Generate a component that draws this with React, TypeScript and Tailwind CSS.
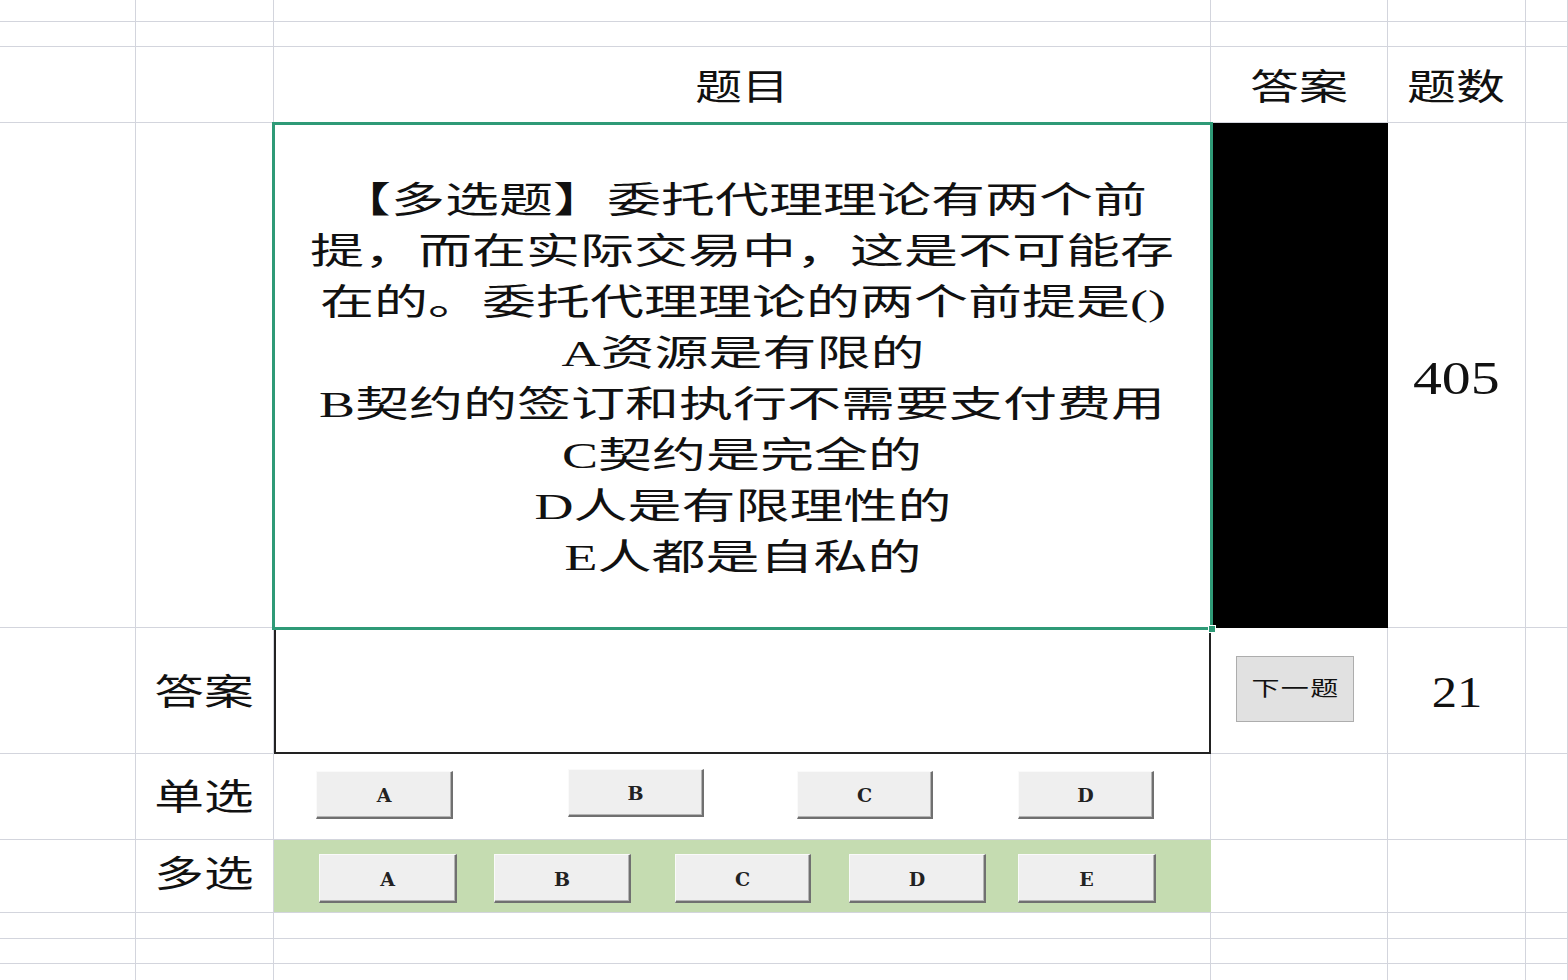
import React from "react";

const FONT = { fontFamily: '"Liberation Serif", "Noto Sans CJK SC", serif' };
const BTNFONT = { fontFamily: '"DejaVu Serif", "Liberation Serif", serif' };

function XBtn({ label, className }: { label: string; className: string }) {
  return (
    <div
      className={
        "flex items-center justify-center bg-[#efefef] border-t border-l border-t-[#fafafa] border-l-[#fafafa] border-r-2 border-b-2 border-r-[#707070] border-b-[#707070] shadow-[inset_-1px_-1px_0_#b4b4b4] " +
        className
      }
    >
      <span className="pt-[2px] text-[19px] leading-none font-semibold text-[#222]" style={BTNFONT}>
        {label}
      </span>
    </div>
  );
}

const lines = [
  "【多选题】委托代理理论有两个前",
  "提，而在实际交易中，这是不可能存",
  "在的。委托代理理论的两个前提是()",
  "A资源是有限的",
  "B契约的签订和执行不需要支付费用",
  "C契约是完全的",
  "D人是有限理性的",
  "E人都是自私的",
];

function cell(r: number, c: number) {
  const base = "border-r border-b border-[#d3d5dd]";
  if (r === 2 && c === 2)
    return (
      <div key={`${r}-${c}`} className={base + " flex items-center justify-center pt-[6px]"}>
        <span className="inline-block scale-x-[1.3] text-[36px] leading-none text-[#111]">题目</span>
      </div>
    );
  if (r === 2 && c === 3)
    return (
      <div key={`${r}-${c}`} className={base + " flex items-center justify-center pt-[6px]"}>
        <span className="inline-block scale-x-[1.36] text-[36px] leading-none text-[#111]">答案</span>
      </div>
    );
  if (r === 2 && c === 4)
    return (
      <div key={`${r}-${c}`} className={base + " flex items-center justify-center pt-[6px]"}>
        <span className="inline-block scale-x-[1.36] text-[36px] leading-none text-[#111]">题数</span>
      </div>
    );
  if (r === 3 && c === 2)
    return (
      <div key={`${r}-${c}`} className="relative z-10 flex flex-col items-center justify-center pt-[8px] bg-white">
        {lines.map((l, i) => (
          <span
            key={i}
            className="inline-block scale-x-[1.5] whitespace-pre text-[36px] leading-[51px] text-[#111]"
          >
            {l}
          </span>
        ))}
        <div className="absolute -left-[2px] -top-[1px] -right-[2px] -bottom-[2px] border-[3px] border-[#2f9a77]" />
        <div className="absolute -right-[5px] -bottom-[5px] w-[8px] h-[8px] bg-[#2f9a77] border border-white" />
      </div>
    );
  if (r === 3 && c === 3) return <div key={`${r}-${c}`} className="bg-black" />;
  if (r === 3 && c === 4)
    return (
      <div key={`${r}-${c}`} className={base + " flex items-center justify-center pt-[6px]"}>
        <span className="inline-block scale-x-[1.23] text-[47px] leading-none text-[#111]">405</span>
      </div>
    );
  if (r === 4 && c === 1)
    return (
      <div key={`${r}-${c}`} className={base + " flex items-center justify-center pt-[4px]"}>
        <span className="inline-block scale-x-[1.38] text-[36px] leading-none text-[#111]">答案</span>
      </div>
    );
  if (r === 4 && c === 2)
    return <div key={`${r}-${c}`} className="border-l-2 border-r-2 border-b-2 border-[#222] bg-white" />;
  if (r === 4 && c === 3)
    return (
      <div key={`${r}-${c}`} className={base + " pl-[25px] pt-[28px]"}>
        <div className="w-[118px] h-[66px] bg-[#e1e1e1] border border-[#adadad] flex items-center justify-center">
          <span className="inline-block scale-x-[1.4] text-[20px] leading-none text-[#111] tracking-[1px]">下一题</span>
        </div>
      </div>
    );
  if (r === 4 && c === 4)
    return (
      <div key={`${r}-${c}`} className={base + " flex items-center justify-center pt-[4px]"}>
        <span className="inline-block scale-x-[1.15] text-[44px] leading-none text-[#111]">21</span>
      </div>
    );
  if (r === 5 && c === 1)
    return (
      <div key={`${r}-${c}`} className={base + " flex items-center justify-center pt-[2px]"}>
        <span className="inline-block scale-x-[1.38] text-[36px] leading-none text-[#111]">单选</span>
      </div>
    );
  if (r === 5 && c === 2)
    return (
      <div key={`${r}-${c}`} className={base + " flex items-start pt-[17px]"}>
        <XBtn label="A" className="ml-[42px] w-[137px] h-[48px]" />
        <XBtn label="B" className="ml-[115px] -mt-[2px] w-[136px] h-[48px]" />
        <XBtn label="C" className="ml-[93px] w-[136px] h-[48px]" />
        <XBtn label="D" className="ml-[85px] w-[136px] h-[48px]" />
      </div>
    );
  if (r === 6 && c === 1)
    return (
      <div key={`${r}-${c}`} className={base + " flex items-center justify-center pb-[2px]"}>
        <span className="inline-block scale-x-[1.38] text-[36px] leading-none text-[#111]">多选</span>
      </div>
    );
  if (r === 6 && c === 2)
    return (
      <div key={`${r}-${c}`} className="bg-[#c5dcb1] flex items-start pt-[14px] border-b border-[#d3d5dd]">
        <XBtn label="A" className="ml-[45px] w-[138px] h-[49px]" />
        <XBtn label="B" className="ml-[37px] w-[137px] h-[49px]" />
        <XBtn label="C" className="ml-[44px] w-[136px] h-[49px]" />
        <XBtn label="D" className="ml-[38px] w-[137px] h-[49px]" />
        <XBtn label="E" className="ml-[32px] w-[138px] h-[49px]" />
      </div>
    );
  return <div key={`${r}-${c}`} className={base} />;
}

export default function App() {
  const rows = Array.from({ length: 10 }, (_, i) => i);
  const cols = Array.from({ length: 6 }, (_, i) => i);
  return (
    <div className="w-[1568px] h-[980px] bg-white overflow-hidden" style={FONT}>
      <div className="grid grid-cols-[136px_138px_937px_177px_138px_42px] grid-rows-[22px_25px_76px_505px_126px_86px_73px_26px_25px_30px] h-[994px]">
        {rows.map((r) => cols.map((c) => cell(r, c)))}
      </div>
    </div>
  );
}
